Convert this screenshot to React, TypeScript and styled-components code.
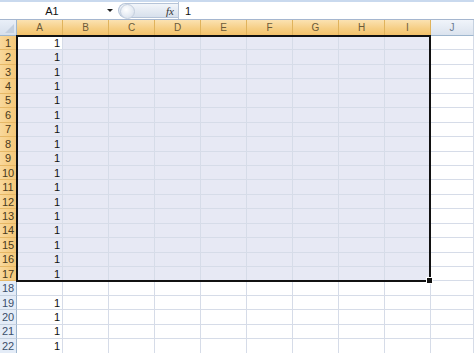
import styled, { createGlobalStyle } from "styled-components";

const GlobalStyle = createGlobalStyle`
    html, body {
        margin: 0;
        padding: 0;
        background: #ffffff;
        overflow: hidden;
    }
    body {
        font-family: "Liberation Sans", Arial, sans-serif;
    }
`;

const COLS = ["A", "B", "C", "D", "E", "F", "G", "H", "I", "J"];
const ROWS = 22;
const SEL_ROWS = 17;
const SEL_COLS = 9;
const ROW_H = 14.45;
const HEAD_H = 16;
const COL_W = 46;
const ROWHEAD_W = 17;

const values: Record<number, string> = {};
for (let r = 1; r <= 22; r++) {
    if (r !== 18) values[r] = "1";
}

const Page = styled.div`
    width: 474px;
    height: 353px;
    overflow: hidden;
    position: relative;
    background: #ffffff;
`;

const FormulaBar = styled.div`
    display: flex;
    height: 20px;
    box-sizing: border-box;
    border-top: 2px solid #c9d9ee;
    border-bottom: 1px solid #a5b6cf;
    background: #ffffff;
`;

const NameBox = styled.div`
    position: relative;
    width: 118px;
    display: flex;
    align-items: center;
    justify-content: center;
    font-size: 11px;
    color: #111;
    padding-right: 14px;
    box-sizing: border-box;
`;

const DropArrow = styled.span`
    position: absolute;
    right: 5px;
    top: 7px;
    width: 0;
    height: 0;
    border-left: 3px solid transparent;
    border-right: 3px solid transparent;
    border-top: 3px solid #222;
`;

const Pill = styled.div`
    position: relative;
    width: 60px;
    margin: 1px 0 1px 0;
    border-radius: 8px 0 0 8px;
    background: linear-gradient(#f2f5fa, #d7e0ec);
    border: 1px solid #b6c4d8;
    border-right: none;
    display: flex;
    align-items: center;
    justify-content: flex-end;
    padding-right: 4px;
    box-sizing: border-box;
`;

const Knob = styled.span`
    position: absolute;
    left: 1px;
    top: 0px;
    width: 15px;
    height: 15px;
    border-radius: 50%;
    background: radial-gradient(circle at 40% 35%, #ffffff, #dfe6f0 70%);
    border: 1px solid #c3cedd;
    box-sizing: border-box;
`;

const Fx = styled.span`
    font-family: "Liberation Serif", "Times New Roman", serif;
    font-style: italic;
    font-size: 11px;
    color: #333;
`;

const FormulaInput = styled.div`
    flex: 1;
    border-left: 1px solid #b6c4d8;
    display: flex;
    align-items: center;
    padding-left: 6px;
    font-size: 11px;
    color: #111;
`;

const Grid = styled.div`
    position: relative;
    display: grid;
    grid-template-columns: ${ROWHEAD_W}px repeat(${SEL_COLS}, ${COL_W}px) 1fr;
    grid-template-rows: ${HEAD_H}px repeat(${ROWS}, ${ROW_H}px);
    font-size: 11px;
`;

const Corner = styled.div`
    background: linear-gradient(#e9eff8, #d6dfec);
    border-right: 1px solid #9eb6ce;
    border-bottom: 1px solid #9eb6ce;
    box-sizing: border-box;
    position: relative;

    &:after {
        content: "";
        position: absolute;
        right: 2px;
        bottom: 2px;
        width: 0;
        height: 0;
        border-left: 9px solid transparent;
        border-bottom: 9px solid #c3cfdf;
    }
`;

const ColHead = styled.div<{ $active: boolean }>`
    display: flex;
    align-items: center;
    justify-content: center;
    box-sizing: border-box;
    font-size: 10px;
    color: ${(p) => (p.$active ? "#6b5a3a" : "#6a7b92")};
    background: ${(p) =>
        p.$active
            ? "linear-gradient(#fbe2b2, #f6cf86 55%, #f3c26a)"
            : "linear-gradient(#f0f4fa, #dbe3ee)"};
    border-right: 1px solid ${(p) => (p.$active ? "#e0b35c" : "#c5d1e0")};
    border-bottom: 1px solid ${(p) => (p.$active ? "#f29436" : "#9eb6ce")};
`;

const RowHead = styled.div<{ $active: boolean }>`
    display: flex;
    align-items: center;
    justify-content: center;
    box-sizing: border-box;
    font-size: 11px;
    color: ${(p) => (p.$active ? "#4a3a1c" : "#3b4f6b")};
    background: ${(p) => (p.$active ? "linear-gradient(90deg, #f9d89b, #f4c777)" : "#e4ecf7")};
    border-bottom: 1px solid ${(p) => (p.$active ? "#e6b866" : "#c5d1e0")};
    border-right: 1px solid ${(p) => (p.$active ? "#f29436" : "#9eb6ce")};
`;

const Cell = styled.div<{ $sel: boolean; $active: boolean }>`
    display: flex;
    align-items: center;
    justify-content: flex-end;
    padding-right: 2px;
    box-sizing: border-box;
    font-size: 11px;
    color: #111;
    background: ${(p) => (p.$active ? "#ffffff" : p.$sel ? "#e7e9f4" : "#ffffff")};
    border-right: 1px solid #d6dce8;
    border-bottom: 1px solid #d6dce8;
`;

const Selection = styled.div`
    position: absolute;
    left: ${ROWHEAD_W - 1}px;
    top: ${HEAD_H - 1}px;
    width: ${SEL_COLS * COL_W + 1}px;
    height: ${SEL_ROWS * ROW_H + 1}px;
    border: 2px solid #111;
    box-sizing: border-box;
    pointer-events: none;
`;

const FillHandle = styled.span`
    position: absolute;
    right: -4px;
    bottom: -4px;
    width: 5px;
    height: 5px;
    background: #111;
    border: 1px solid #fff;
`;

function App() {
    const cells = [];
    for (let r = 1; r <= ROWS; r++) {
        const rowActive = r <= SEL_ROWS;
        cells.push(
            <RowHead key={`h${r}`} $active={rowActive}>
                {r}
            </RowHead>
        );
        COLS.forEach((c, i) => {
            const sel = rowActive && i < SEL_COLS;
            cells.push(
                <Cell key={`${c}${r}`} $sel={sel} $active={r === 1 && i === 0}>
                    {i === 0 ? values[r] : ""}
                </Cell>
            );
        });
    }

    return (
        <Page>
            <GlobalStyle />
            <FormulaBar>
                <NameBox>
                    A1
                    <DropArrow />
                </NameBox>
                <Pill>
                    <Knob />
                    <Fx>fx</Fx>
                </Pill>
                <FormulaInput>1</FormulaInput>
            </FormulaBar>
            <Grid>
                <Corner />
                {COLS.map((c, i) => (
                    <ColHead key={c} $active={i < SEL_COLS}>
                        {c}
                    </ColHead>
                ))}
                {cells}
                <Selection>
                    <FillHandle />
                </Selection>
            </Grid>
        </Page>
    );
}

export default App;
